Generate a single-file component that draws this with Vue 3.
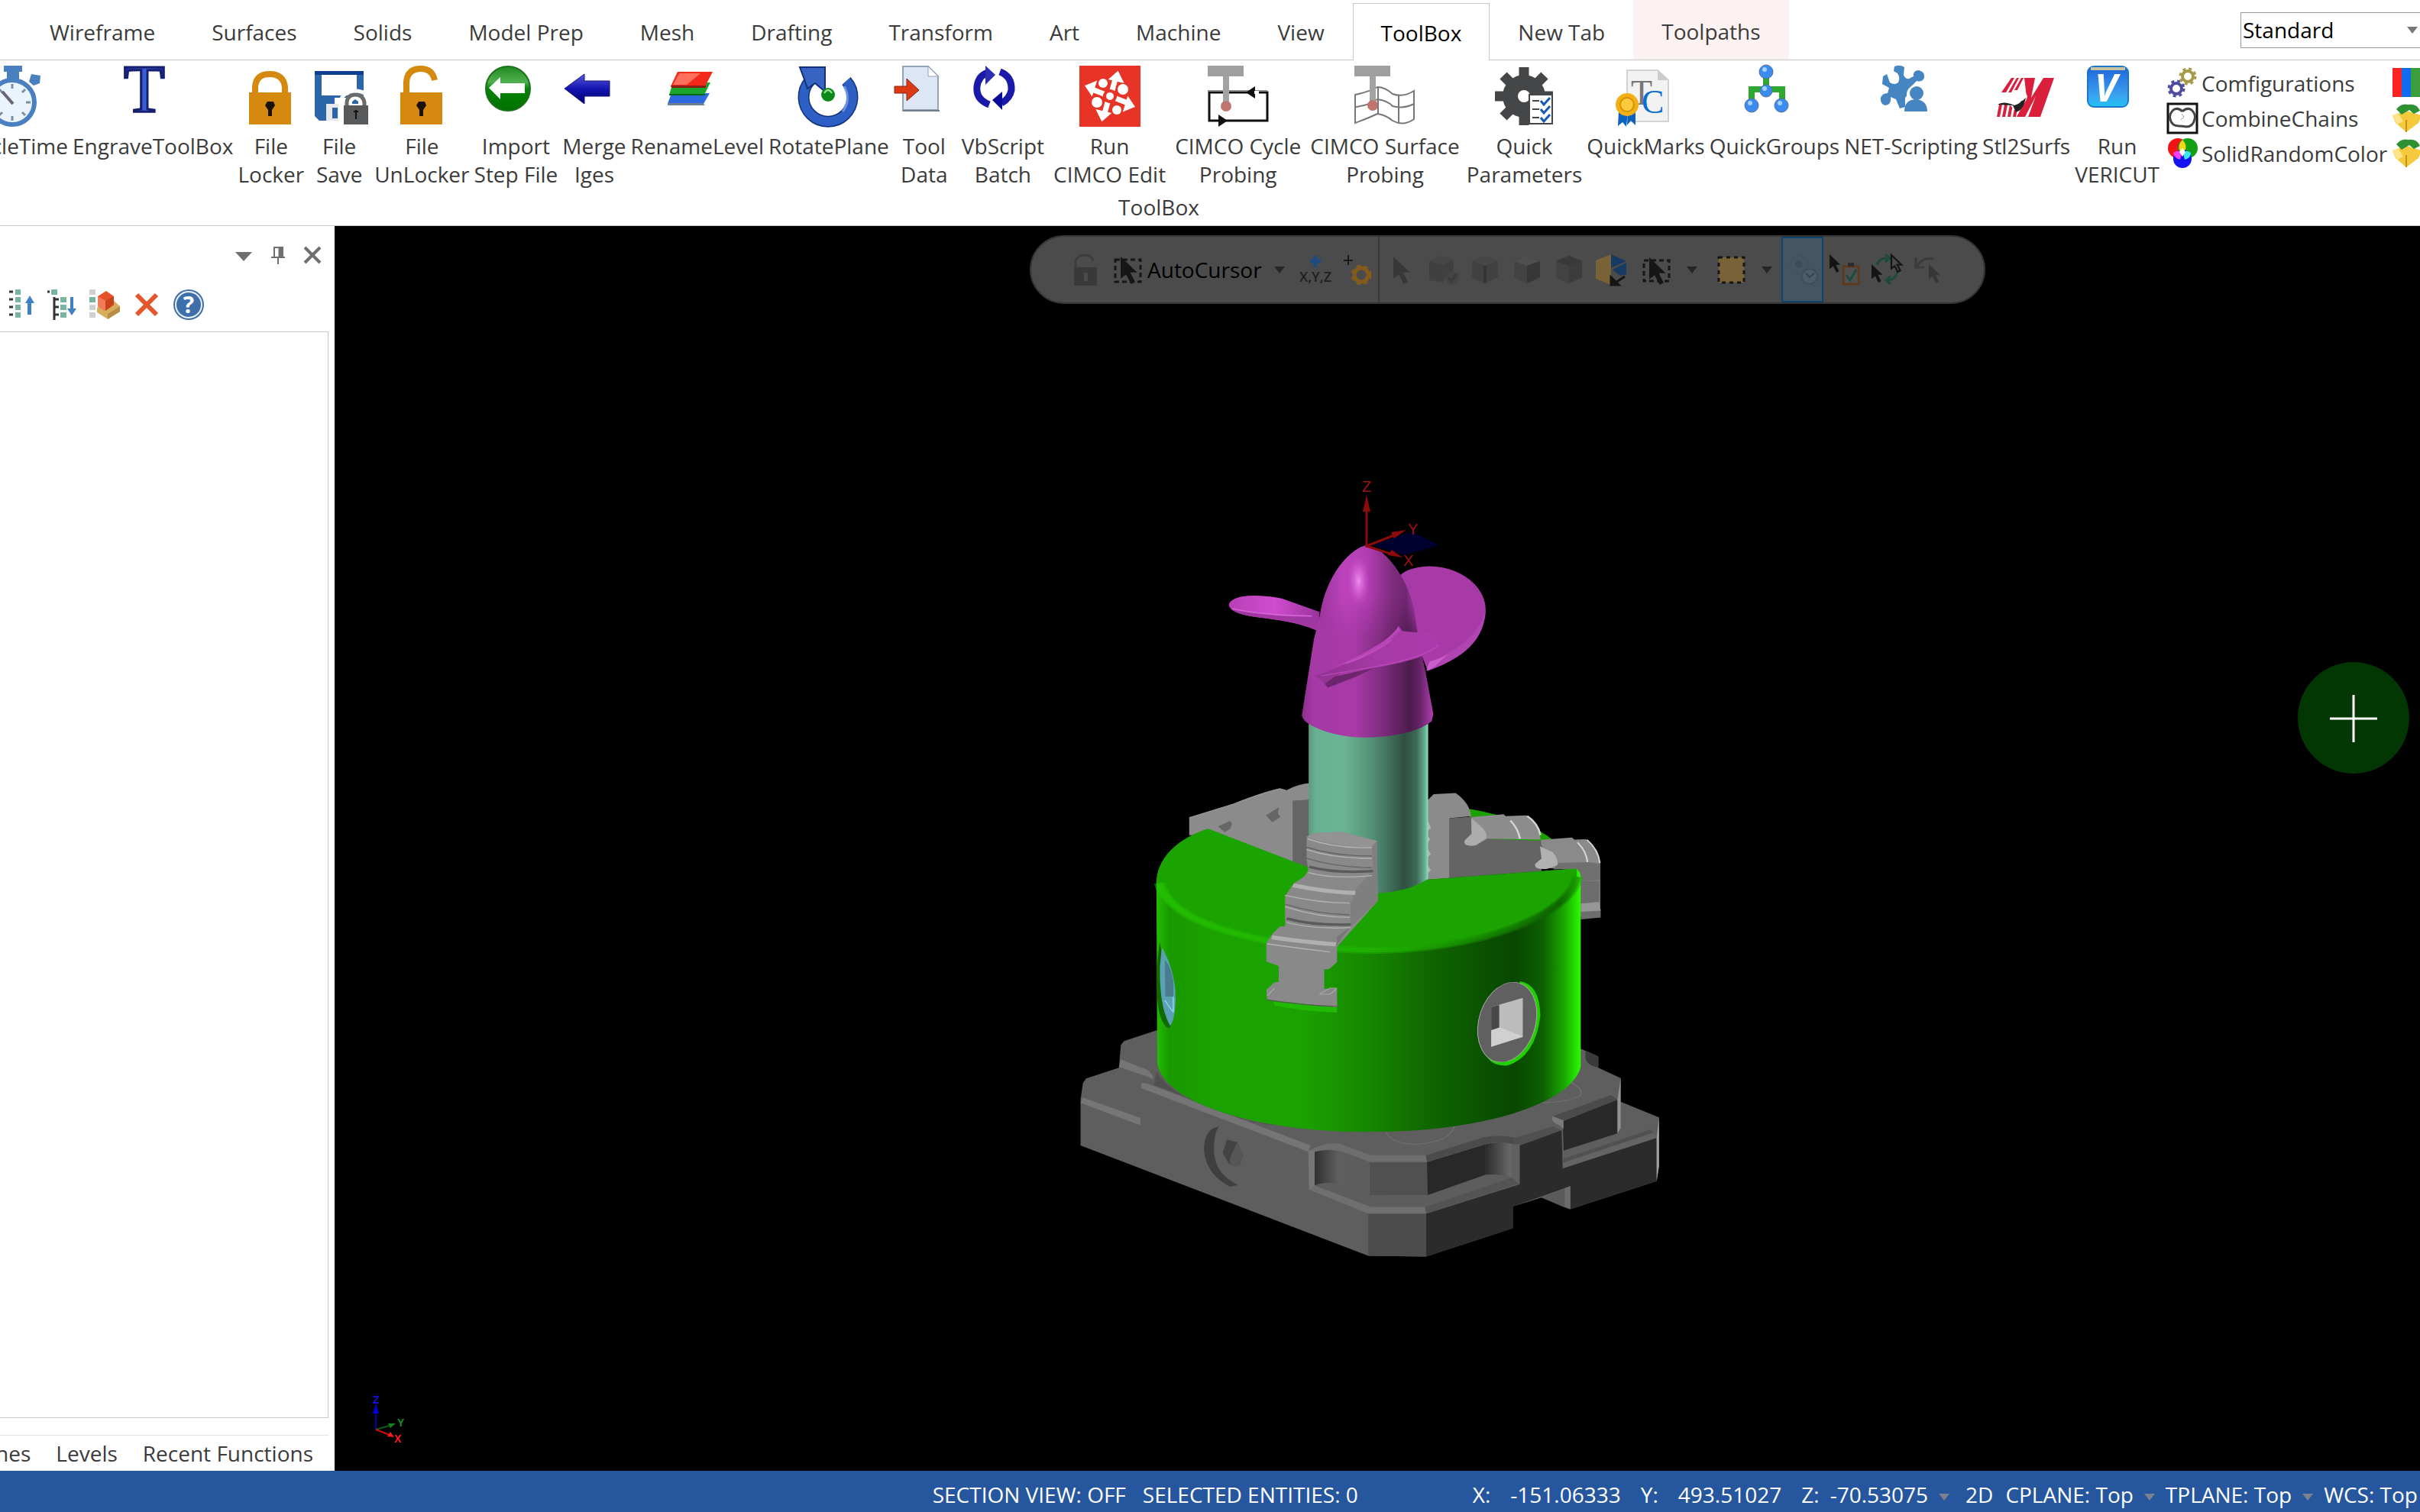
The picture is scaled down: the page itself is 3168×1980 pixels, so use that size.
<template>
  <div class="app">
    <header class="tab-bar">
      <nav class="tabs">
        <button
          v-for="tab in tabs"
          :key="tab"
          class="tab"
          :class="{ active: tab === activeTab, context: tab === 'Toolpaths' }"
          @click="activeTab = tab"
        >{{ tab }}</button>
      </nav>
      <select v-model="style" class="style-select" aria-label="Attribute style">
        <option>Standard</option>
      </select>
      <svg class="style-arrow" width="14" height="10" viewBox="0 0 14 10"><path d="M0 0h14L7 9z" fill="#777" /></svg>
    </header>

    <section class="ribbon">
      <div class="ribbon-row">
        <button v-for="tool in tools" :key="tool.icon" class="tool" :class="{ roomy: tool.roomy }">
          <svg class="tool-icon" viewBox="0 0 80 80" v-html="icons[tool.icon]"></svg>
          <span class="tool-label">{{ tool.label }}</span>
        </button>
        <div class="small-tools">
          <button v-for="item in smallTools" :key="item.icon" class="small-tool">
            <svg class="small-icon" viewBox="0 0 40 40" v-html="icons[item.icon]"></svg>
            <span>{{ item.label }}</span>
          </button>
        </div>
        <div class="small-tools">
          <button v-for="(name, i) in ['palette', 'gem', 'gem']" :key="i" class="small-tool" :aria-label="name">
            <svg class="small-icon" viewBox="0 0 40 40" v-html="icons[name]"></svg>
          </button>
        </div>
      </div>
      <div class="group-label">ToolBox</div>
    </section>

    <main class="workspace">
      <aside class="panel">
        <div class="panel-header">
          <button aria-label="Menu"><svg width="24" height="24" viewBox="0 0 24 24"><path d="M1 8h22L12 20z" fill="#6f6f6f" /></svg></button>
          <button aria-label="Pin">
            <svg width="24" height="24" viewBox="0 0 24 24" fill="none" stroke="#6f6f6f" stroke-width="2">
              <path d="M7 15V2h11v13M3 15h18M12 15v9" /><path d="M15 2v13" stroke-width="5" />
            </svg>
          </button>
          <button aria-label="Close"><svg width="24" height="24" viewBox="0 0 24 24"><path d="M2 2l20 20M22 2L2 22" stroke="#6f6f6f" stroke-width="4" /></svg></button>
        </div>
        <div class="panel-tools">
          <button v-for="name in panelTools" :key="name" :aria-label="name">
            <svg width="40" height="40" viewBox="0 0 40 40" v-html="icons[name]"></svg>
          </button>
        </div>
        <div class="panel-body"></div>
        <nav class="panel-tabs">
          <button v-for="t in panelTabs" :key="t">{{ t }}</button>
        </nav>
      </aside>

      <div class="viewport">
        <svg class="scene" viewBox="0 0 2730 1630" preserveAspectRatio="xMidYMid meet">
          <defs>
            <linearGradient id="greenSide" gradientUnits="userSpaceOnUse" x1="256" x2="1320" y1="0" y2="0">
              <stop offset="0" stop-color="#23bd00" /><stop offset=".03" stop-color="#199900" />
              <stop offset=".14" stop-color="#1ba200" /><stop offset=".34" stop-color="#1ba200" />
              <stop offset=".5" stop-color="#168600" /><stop offset=".66" stop-color="#0e6300" />
              <stop offset=".84" stop-color="#084600" /><stop offset=".91" stop-color="#0c6000" />
              <stop offset=".96" stop-color="#1aaa00" /><stop offset="1" stop-color="#2cff00" />
            </linearGradient>
            <linearGradient id="greenRim" gradientUnits="userSpaceOnUse" x1="256" x2="1320" y1="0" y2="0">
              <stop offset="0" stop-color="#24c000" /><stop offset=".5" stop-color="#20b400" />
              <stop offset=".7" stop-color="#189600" /><stop offset=".85" stop-color="#127800" />
              <stop offset=".95" stop-color="#0c6000" /><stop offset="1" stop-color="#1cae00" />
            </linearGradient>
            <linearGradient id="teal" gradientUnits="userSpaceOnUse" x1="637" x2="936" y1="0" y2="0">
              <stop offset="0" stop-color="#5c9a80" /><stop offset=".06" stop-color="#68b193" />
              <stop offset=".3" stop-color="#6ab494" /><stop offset=".55" stop-color="#528b73" />
              <stop offset=".8" stop-color="#2f5142" /><stop offset=".9" stop-color="#3c6755" />
              <stop offset=".97" stop-color="#65aa8d" /><stop offset="1" stop-color="#8de0c0" />
            </linearGradient>
            <linearGradient id="hub" gradientUnits="userSpaceOnUse" x1="620" x2="950" y1="0" y2="0">
              <stop offset="0" stop-color="#8c2f8c" /><stop offset=".08" stop-color="#a539a5" />
              <stop offset=".4" stop-color="#a83aa8" /><stop offset=".62" stop-color="#7c2b7c" />
              <stop offset=".82" stop-color="#4d1b4d" /><stop offset=".9" stop-color="#692469" />
              <stop offset="1" stop-color="#b440b4" />
            </linearGradient>
            <linearGradient id="nose" gradientUnits="userSpaceOnUse" x1="666" x2="905" y1="0" y2="0">
              <stop offset="0" stop-color="#9b369b" /><stop offset=".25" stop-color="#bd43bd" />
              <stop offset=".5" stop-color="#b03db0" /><stop offset=".75" stop-color="#7f2c7f" />
              <stop offset=".9" stop-color="#712771" /><stop offset="1" stop-color="#b440b4" />
            </linearGradient>
            <linearGradient id="noseFade" x1="0" x2="0" y1="0" y2="1">
              <stop offset="0" stop-color="#fff" /><stop offset=".55" stop-color="#fff" /><stop offset="1" stop-color="#000" />
            </linearGradient>
            <mask id="noseMask" maskUnits="userSpaceOnUse" x="640" y="290" width="300" height="330">
              <rect x="640" y="290" width="300" height="330" fill="url(#noseFade)" />
            </mask>
            <radialGradient id="shine">
              <stop offset="0" stop-color="#f08cf0" /><stop offset=".5" stop-color="#d865d8" stop-opacity=".6" />
              <stop offset="1" stop-color="#c045c0" stop-opacity="0" />
            </radialGradient>
            <linearGradient id="bladeL" x1="0" x2="1" y1="0" y2="0">
              <stop offset="0" stop-color="#b840b8" /><stop offset=".5" stop-color="#d04cd0" /><stop offset="1" stop-color="#9a349a" />
            </linearGradient>
            <linearGradient id="bladeF" x1="0" x2="1" y1="0" y2="0">
              <stop offset="0" stop-color="#8e318e" /><stop offset=".5" stop-color="#a63aa6" /><stop offset="1" stop-color="#ab3bab" />
            </linearGradient>
            <linearGradient id="pocketL" x1="0" x2="1" y1="0" y2="0">
              <stop offset="0" stop-color="#303030" /><stop offset=".7" stop-color="#5e5e5e" />
            </linearGradient>
            <linearGradient id="pocketR" x1="0" x2="1" y1="0" y2="0">
              <stop offset="0" stop-color="#2c2c2c" /><stop offset="1" stop-color="#6b6b6b" />
            </linearGradient>
          </defs>

          <!-- base plate -->
          <g transform="translate(942 854) scale(.523 .3333)">
            <path d="M256 598L175 640 167 655 162 745 80 787 72 805 66 870V1050L786 1484 931 1487 1148 1376V1290L1220 1255 1292 1301 1508 1190 1514 1130V940L1418 878V785L1362 745V700L1318 670z" fill="#5e5e5e" />
            <path d="M931 1318L1165 1203V1050L1270 990 1273 1140 1508 1020V1190L1292 1301V1210L1148 1290V1376L931 1487z" fill="#2b2b2b" />
            <path d="M1220 1255L1278 1224V1294z" fill="#5a5a5a" />
            <path d="M1278 1218l14-8v91l-14-8z" fill="#6b6b6b" />
            <path d="M1273 955L1410 870V1003L1275 1070z" fill="#292929" />
            <path d="M1248 935L1394 852 1410 870 1275 952z" fill="#4b4b4b" />
            <path d="M1410 870l8-85v195l-8 23z" fill="#929292" />
            <path d="M1508 1020l6-80v190l-6 60z" fill="#a0a0a0" />
            <path d="M1273 1103L1494 987 1508 1020 1273 1140z" fill="#646464" />
            <path d="M1273 1103L1494 987 1500 1000 1273 1118z" fill="#515151" />
            <path d="M786 1318H931V1487L786 1484z" fill="#4c4c4c" />
            <path d="M640 1225L652 1207 792 1291H928L1145 1175 1165 1200 931 1318H786z" fill="#6f6f6f" />
            <path d="M928 1291L1145 1175 1165 1200 931 1318z" fill="#545454" />
            <path d="M652 1075Q700 1055 735 1080L790 1115V1245L935 1247 1080 1165 1145 1175 928 1291H792L652 1207z" fill="#5d5d5d" />
            <path d="M652 1075Q700 1055 735 1080L735 1225 700 1198Q670 1195 652 1207z" fill="url(#pocketL)" />
            <path d="M790 1115H933L935 1245H790z" fill="#505050" />
            <path d="M933 1115L1080 1045V1165L935 1245z" fill="#282828" />
            <path d="M1080 1045Q1115 1032 1145 1044V1175Q1110 1160 1080 1165z" fill="url(#pocketR)" />
            <path d="M636 1072Q690 1025 730 1052L792 1088H930L1075 1018Q1120 1005 1155 1020L1148 1044Q1110 1032 1080 1045L933 1115H790L728 1078Q690 1058 652 1075z" fill="#6e6e6e" />
            <path d="M930 1088L1075 1018Q1120 1005 1155 1020L1148 1044Q1110 1032 1080 1045L933 1115z" fill="#4b4b4b" />
            <path d="M1155 1020L1248 975 1270 990 1165 1050H1145z" fill="#505050" />
            <path d="M1145 1045h20v157l-20-27z" fill="#606060" />
            <path d="M218 805L232 806 642 1050 636 1075 218 825z" fill="#757575" />
            <path d="M636 1070h16v138l-14 18z" fill="#767676" />
            <path d="M72 862L216 942V971L66 883z" fill="#767676" />
            <path d="M167 712L232 752Q248 768 248 790L234 780 162 742z" fill="#757575" />
            <path d="M256 760Q300 880 520 965L790 1000 500 960 250 812z" fill="#484848" opacity=".6" />
            <path d="M1248 935Q1240 955 1262 968L1275 985 1275 952z" fill="#7a7a7a" />
            <path d="M1330 678L1362 700V745Q1335 735 1330 710z" fill="#3a3a3a" />
            <path d="M832 1000Q845 1045 910 1045 990 1035 1002 975M1290 800Q1330 830 1315 855 1280 885 1200 882" fill="none" stroke="#777" stroke-width="2" />
            <path d="M413 975Q375 985 375 1065 378 1160 440 1212L460 1205Q400 1160 400 1065 400 1000 413 975z" fill="#3f3f3f" />
            <path d="M432 1027L458 1037 473 1090 462 1132 440 1127 422 1080z" fill="#434343" />
            <path d="M458 1037L473 1090 462 1132 440 1127 440 1100z" fill="#565656" />
          </g>

          <!-- rear jaws -->
          <g transform="translate(942 304) scale(.523 .3827)">
            <path d="M1040 1200Q1200 1240 1260 1320L1040 1320z" fill="#1ba000" />
            <path d="M338 1230L450 1183Q520 1145 565 1131L580 1137Q610 1115 640 1112V1420L385 1290 338 1290z" fill="#8b8b8b" />
            <path d="M338 1230L450 1183Q520 1145 565 1131L580 1137" fill="none" stroke="#999" stroke-width="3" />
            <path d="M597 1172L640 1168V1410L597 1388z" fill="#656565" />
            <path d="M410 1260l30-19 5 10-4 16-14 13zM530 1222l33-28-3 22 6 12-20 18z" fill="#666" />
            <path d="M935 1170L950 1150 1005 1146Q1040 1180 1044 1225L990 1232V1445L932 1443z" fill="#8b8b8b" />
            <path d="M935 1240l8 25-8 10zM935 1290l6 15-6 10zM935 1340l8 14-8 12zM935 1395l8 14-8 12z" fill="#b5b5b5" />
            <path d="M990 1232L1050 1226V1300L1220 1310V1415L930 1443H990z" fill="#646464" />
            <path d="M1044 1228L1125 1218 1130 1225 1182 1222Q1212 1250 1218 1305L1085 1302 1055 1325Q1022 1330 1028 1308L1045 1285z" fill="#8d8d8d" />
            <path d="M1044 1232l22 25Q1085 1280 1082 1300L1055 1325Q1022 1330 1028 1308L1045 1285z" fill="#acacac" />
            <path d="M1142 1240Q1160 1265 1166 1302M1184 1224Q1212 1250 1217 1290" fill="none" stroke="#d6d6d6" stroke-width="5" />
            <path d="M1218 1306L1296 1298 1302 1305 1332 1304Q1362 1340 1367 1385V1568H1318V1410L1205 1400 1225 1370z" fill="#8a8a8a" />
            <path d="M1262 1385L1338 1382 1367 1388V1444L1318 1446 1310 1405 1250 1407z" fill="#707070" />
            <path d="M1216 1328l32 20Q1262 1370 1260 1392L1235 1405Q1200 1410 1204 1388L1220 1370z" fill="#b1b1b1" />
            <path d="M1310 1315Q1332 1345 1335 1382M1334 1306Q1362 1340 1366 1385" fill="none" stroke="#d6d6d6" stroke-width="4" />
            <path d="M1318 1446H1366L1364 1520 1368 1548V1572L1318 1578z" fill="#6d6d6d" />
            <path d="M1318 1524L1364 1518 1368 1548 1318 1552z" fill="#969696" />
          </g>

          <!-- chuck body -->
          <g transform="translate(942 854) scale(.523 .3333)">
            <path d="M385-194C300-150 256-70 256 20L258 730C275 870 480 997 790 997 1100 997 1300 870 1318 740V0C1318-25 1312-37 1300-37L930 6 635-43z" fill="url(#greenSide)" />
            <path d="M385-194C300-150 258-70 258 10 270 170 500 275 800 282 1060 280 1280 150 1308 10V-37H1300L930 6 635-43z" fill="#1ba300" />
            <path d="M264 20C285 170 500 275 800 284 1060 282 1290 150 1310-5" fill="none" stroke="url(#greenRim)" stroke-width="28" opacity=".5" />
            <path d="M264 20C285 170 500 275 800 284 1060 282 1290 150 1310-5" fill="none" stroke="url(#greenRim)" stroke-width="16" opacity=".8" />
            <path d="M264 252Q250 400 262 520 270 580 288 590L292 578Q262 500 268 280z" fill="#106a00" />
            <path d="M270 272Q305 370 304 480 302 560 290 580 262 500 265 340z" fill="#5ba0b4" />
            <path d="M277 322Q290 340 298 400V465H278z" fill="#477d8e" />
            <path d="M298 465V527L277 480" fill="none" stroke="#8fd6ea" stroke-width="3" />
            <path d="M1165 405Q1215 415 1217 540 1205 700 1135 736 1100 740 1085 705L1190 600z" fill="#22d000" />
            <ellipse cx="1134" cy="566" rx="72" ry="158" fill="#606060" stroke="#aaa" stroke-width="2" transform="rotate(7 1134 566)" />
            <path d="M1094 506L1173 470V624L1094 662z" fill="#bcbcbc" />
            <path d="M1094 506l20-8v90l-20 10z" fill="#484848" />
            <path d="M1094 598l22-12 57 36-79 40z" fill="#d0d0d0" />
            <path d="M548 485L708 508V528Q620 522 552 500z" fill="#20bb00" />
          </g>

          <!-- cylinder -->
          <g transform="translate(942 304) scale(.523 .3827)">
            <path d="M637 900H936V1440Q880 1490 785 1490 690 1480 637 1420z" fill="url(#teal)" />
          </g>

          <!-- front jaw -->
          <g transform="translate(942 854) scale(.523 .3333)">
            <path d="M632-163L650-177 720-182 808-146 810 90 708 270V330L688 358H676V435L708 432V508L533 478 531 438 552 408H562V345L531 328V255L548 215 565 190 578 188V70L600 20 625-5 636-30 632-75z" fill="#898989" />
            <path d="M796-128L808-146 810 90 742 190V100L755 42 798-30z" fill="#7f7f7f" />
            <path d="M708 230L742 190 720 235 708 265z" fill="#777" />
            <path d="M632-163L650-177 720-182 808-146 794-122Q700-125 632-163z" fill="#939393" />
            <path d="M632-122Q700-87 795-87M632-78Q700-44 795-41M578 102Q660 142 740 144" fill="none" stroke="#626262" stroke-width="4" />
            <path d="M634-155Q700-117 795-120M632-112Q700-77 795-78M636-22Q700 5 795-10M578 67Q660 97 740 98M578 112Q660 154 740 154M533 258Q610 275 690 290M582 174Q650 202 742 194" fill="none" stroke="#b4b4b4" stroke-width="4" />
            <path d="M598 28Q680 55 754 58M545 232Q620 250 705 260" fill="none" stroke="#b0b0b0" stroke-width="16" />
            <path d="M638-45Q700-18 798-28M582 158Q650 187 742 182" fill="none" stroke="#5a5a5a" stroke-width="10" />
            <path d="M533 462L552 432M664 456L690 432H708M664 456H690L706 436" fill="none" stroke="#a8a8a8" stroke-width="3" />
            <path d="M533 478Q620 500 708 504" fill="none" stroke="#555" stroke-width="3" />
          </g>

          <!-- propeller -->
          <g transform="translate(942 304) scale(.523 .3827)">
            <path d="M866 400Q890 372 940 370C1020 372 1080 440 1080 520 1076 620 1030 680 935 728L910 640z" fill="#a73aa7" />
            <path d="M1080 520C1076 620 1030 680 935 728L940 697Q1060 630 1080 520z" fill="#b044b0" />
            <path d="M940 695Q960 690 985 672L950 715 930 730z" fill="#e070e0" opacity=".6" />
            <path d="M437 502C445 465 510 465 570 480L664 526V595Q620 562 520 546 440 535 437 502z" fill="url(#bladeL)" />
            <path d="M440 510Q500 540 655 545L660 590Q620 562 520 546 450 535 440 510z" fill="#a138a1" />
            <path d="M445 515Q520 538 645 540" fill="none" stroke="#d866d8" stroke-width="4" />
            <path d="M782 298C740 310 680 400 665 540L650 620 620 880Q622 900 645 915 700 955 785 956 900 950 945 900L949 875 930 735 915 640 905 560C895 430 840 330 800 306z" fill="url(#hub)" />
            <path d="M782 298C740 310 680 400 665 540V620H913L905 560C895 430 840 330 800 306z" fill="url(#nose)" mask="url(#noseMask)" />
            <ellipse cx="762" cy="420" rx="30" ry="95" fill="url(#shine)" />
            <path d="M862 575L872 592 940 600Q965 615 962 640 940 685 810 715L720 735 680 775 655 745Q730 710 790 655 850 610 862 575z" fill="url(#bladeF)" />
            <path d="M862 575Q840 620 790 655 740 695 690 720L760 690Q830 640 866 590z" fill="#b946b9" />
            <path d="M845 620Q800 670 730 702" fill="none" stroke="#cf5bcf" stroke-width="5" opacity=".5" />
            <path d="M962 640Q930 680 810 712L660 747" fill="none" stroke="#bb4bbb" stroke-width="3" />
            <path d="M700 748L800 718 755 748 685 785 675 768z" fill="#6d256d" />
            <path d="M657 745L705 744 678 772z" fill="#943494" />
          </g>

          <!-- axis markers -->
          <g fill="none" stroke="#8c0a0a" stroke-width="3">
            <path d="M1358 418L1410 400 1446 418 1400 431z" fill="#00002e" stroke="none" />
            <path d="M1351 372V419L1392 403M1351 419L1388 431" />
            <path d="M1351 352l-5 22h10zM1403 398l-20 3 4 8zM1398 434l-14-10-5 7z" fill="#8c0a0a" stroke="none" />
          </g>
          <g class="axis-text" fill="#9c1010">
            <text x="1345" y="348">Z</text><text x="1405" y="404">Y</text><text x="1399" y="445">X</text>
          </g>
          <g fill="none" stroke-width="2">
            <path d="M54 1576V1552" stroke="#0000b0" /><path d="M54 1542l-4 13h8z" fill="#0000d8" />
            <path d="M54 1576L72 1571" stroke="#0c5a14" /><path d="M80 1568l-10 0 3 6z" fill="#128020" />
            <path d="M54 1576L72 1583" stroke="#d01010" /><path d="M78 1586l-5-7-4 6z" fill="#ff1a1a" />
          </g>
          <g class="axis-text small">
            <text x="50" y="1542" fill="#1212e0">Z</text><text x="82" y="1572" fill="#149024">Y</text><text x="78" y="1593" fill="#ff1a1a">X</text>
          </g>

          <!-- pointer -->
          <circle cx="2643" cy="644" r="73" fill="#023602" />
          <path d="M2643 614v62M2612 645h62" stroke="#fff" stroke-width="3" />
        </svg>

        <div class="selection-bar">
          <button class="sel-btn" aria-label="Lock"><svg viewBox="0 0 40 40" v-html="icons.selLock"></svg></button>
          <button class="auto-cursor">
            <svg viewBox="0 0 40 40" v-html="icons.cursorBox"></svg>
            <span>AutoCursor</span>
            <i class="caret"></i>
          </button>
          <button class="sel-btn" aria-label="Fast point"><svg viewBox="0 0 40 40" v-html="icons.xyz"></svg></button>
          <button class="sel-btn last" aria-label="Options"><svg viewBox="0 0 40 40" v-html="icons.addGear"></svg></button>
          <button
            v-for="item in selectionTools"
            :key="item.icon"
            class="sel-btn"
            :class="{ split: item.split, selected: item.selected }"
            :aria-label="item.icon"
          >
            <svg viewBox="0 0 40 40" v-html="icons[item.icon]"></svg>
            <i v-if="item.split" class="caret"></i>
          </button>
        </div>
      </div>
    </main>

    <footer class="status-bar">
      <span class="section-view">SECTION VIEW: OFF</span>
      <span class="entities">SELECTED ENTITIES: 0</span>
      <span class="axis">X:</span><span class="coord">-151.06333</span>
      <span class="axis">Y:</span><span class="coord">493.51027</span>
      <span class="axis">Z:</span><button class="plane first">-70.53075<i class="caret"></i></button>
      <button class="mode">2D</button>
      <button class="plane">CPLANE: Top<i class="caret"></i></button>
      <button class="plane">TPLANE: Top<i class="caret"></i></button>
      <button class="plane">WCS: Top</button>
    </footer>
  </div>
</template>

<script setup>
import { ref } from 'vue'

const activeTab = ref('ToolBox')
const style = ref('Standard')

const tabs = [
  'Wireframe', 'Surfaces', 'Solids', 'Model Prep', 'Mesh', 'Drafting', 'Transform',
  'Art', 'Machine', 'View', 'ToolBox', 'New Tab', 'Toolpaths'
]

const tools = [
  { label: 'CycleTime', icon: 'watch' },
  { label: 'EngraveToolBox', icon: 'engrave' },
  { label: 'File\nLocker', icon: 'lock' },
  { label: 'File\nSave', icon: 'save' },
  { label: 'File\nUnLocker', icon: 'unlock' },
  { label: 'Import\nStep File', icon: 'importStep' },
  { label: 'Merge\nIges', icon: 'merge' },
  { label: 'RenameLevel', icon: 'levels' },
  { label: 'RotatePlane', icon: 'rotate' },
  { label: 'Tool\nData', icon: 'toolData' },
  { label: 'VbScript\nBatch', icon: 'batch', roomy: true },
  { label: 'Run\nCIMCO Edit', icon: 'cimco', roomy: true },
  { label: 'CIMCO Cycle\nProbing', icon: 'cycleProbe', roomy: true },
  { label: 'CIMCO Surface\nProbing', icon: 'surfProbe', roomy: true },
  { label: 'Quick\nParameters', icon: 'params' },
  { label: 'QuickMarks', icon: 'marks' },
  { label: 'QuickGroups', icon: 'groups' },
  { label: 'NET-Scripting', icon: 'net' },
  { label: 'Stl2Surfs', icon: 'stl' },
  { label: 'Run\nVERICUT', icon: 'vericut' }
]

const smallTools = [
  { label: 'Comfigurations', icon: 'config' },
  { label: 'CombineChains', icon: 'chains' },
  { label: 'SolidRandomColor', icon: 'rgb' }
]

const panelTools = ['treeUp', 'treeDown', 'treeSolid', 'cross', 'help']
const panelTabs = ['Planes', 'Levels', 'Recent Functions']

const selectionTools = [
  { icon: 'cursor' },
  { icon: 'cubeCheck' },
  { icon: 'cubeEdge' },
  { icon: 'cubeFace' },
  { icon: 'cube' },
  { icon: 'cubeColor' },
  { icon: 'cursorBox2', split: true },
  { icon: 'window', split: true },
  { icon: 'gearClock', selected: true },
  { icon: 'clipboard' },
  { icon: 'swap' },
  { icon: 'undo' }
]

const arrowHead = 'M0 0L0 32 8 26 15 40 21 37 14 23 24 23z'

const icons = {
  watch: `
    <circle cx="33" cy="48" r="29" fill="#eaf4fc" stroke="#4a7fc0" stroke-width="6"/>
    <path d="M22 0h24v8h-4v9H26V8h-4zM58 11l12 2-1 10-8 3-6-5z" fill="#4a7fc0"/>
    <path d="M33 24v6M33 66v6M9 48h6M51 48h6M16 31l4 4M50 31l-4 4M16 65l4-4M50 65l-4-4" stroke="#7b8fa0" stroke-width="3"/>
    <path d="M20 34l14 16" stroke="#667" stroke-width="4"/>`,
  engrave: `
    <defs><linearGradient id="ge" x1="0" x2="1" y1="0" y2="0"><stop offset="0" stop-color="#16289a"/><stop offset=".55" stop-color="#3a64e0"/><stop offset="1" stop-color="#16289a"/></linearGradient></defs>
    <text x="29" y="60" text-anchor="middle" font-family="Liberation Serif, serif" font-size="88" fill="url(#ge)" stroke="#16206e" stroke-width="3">T</text>`,
  lock: `
    <path d="M19 37V28Q20 11 38 11T58 28V37" fill="none" stroke="#d6890f" stroke-width="8"/>
    <rect x="11" y="35" width="55" height="42" fill="#d6890f"/>
    <path d="M35 47h8l2 5-4 6v8h-5v-8l-4-6z" fill="#1a1208"/>`,
  save: `
    <path d="M8 7H72V42H34V72H14L8 66z" fill="#2c66aa"/><rect x="8" y="7" width="64" height="5" fill="#0f3f8e"/>
    <rect x="17" y="12" width="46" height="27" fill="#fff"/>
    <rect x="23" y="50" width="20" height="22" fill="#e6e8ea"/><rect x="31" y="55" width="7" height="14" fill="#2c66aa"/>
    <path d="M42 74V46Q46 33 61 33T80 46" fill="none" stroke="#fff" stroke-width="5"/>
    <path d="M50 54V48Q51 38 61 38T73 48V54" fill="#fff" stroke="#6b6b6b" stroke-width="5"/>
    <path d="M57 47l4-3 4 3v3h-8z" fill="#2c66aa"/>
    <rect x="46" y="52" width="32" height="25" fill="#58595b"/><path d="M62 58v12M59 60h6" stroke="#111" stroke-width="2"/>`,
  unlock: `
    <path d="M20 37V22Q21 4 39 4 54 4 57 19" fill="none" stroke="#d6890f" stroke-width="8"/>
    <rect x="12" y="35" width="55" height="42" fill="#d6890f"/>
    <path d="M36 47h8l2 5-4 6v8h-5v-8l-4-6z" fill="#1a1208"/>`,
  importStep: `
    <defs><linearGradient id="gi" x1="0" x2="0" y1="0" y2="1"><stop offset="0" stop-color="#1f8a1f"/><stop offset=".35" stop-color="#4fb04f"/><stop offset=".5" stop-color="#068406"/><stop offset="1" stop-color="#007000"/></linearGradient></defs>
    <circle cx="30" cy="30" r="29" fill="url(#gi)" stroke="#1c701c" stroke-width="2"/>
    <path d="M5 29L20 15v8h32v13H20v8z" fill="#fff"/>`,
  merge: `
    <defs><linearGradient id="gm" x1="0" x2="0" y1="0" y2="1"><stop offset="0" stop-color="#5a5ae0"/><stop offset=".5" stop-color="#1414b0"/><stop offset="1" stop-color="#00006e"/></linearGradient></defs>
    <path d="M1 30L27 11v9H60V40H27V50z" fill="url(#gm)" stroke="#15157a" stroke-width="1"/>`,
  levels: `
    <path d="M6 36H56L48 50H1z" fill="#2d6ae0"/><path d="M1 49h46l3 3H1z" fill="#6d8090"/>
    <path d="M8 22H57L49 38H3z" fill="#1aa52c"/><path d="M3 37h47v2H3z" fill="#0b6414"/>
    <path d="M14 8H60L50 27H5z" fill="#f32a1a"/><path d="M16 10H44L26 25H8z" fill="#ff6f5c"/><path d="M5 26h46v3H6z" fill="#8e1c14"/>`,
  rotate: `
    <path d="M63 20A32 32 0 1 1 15 20" fill="none" stroke="#10307c" stroke-width="15"/>
    <path d="M63 20A32 32 0 1 1 15 20" fill="none" stroke="#2e5fc4" stroke-width="12"/>
    <path d="M2 2H35V34L22 23 12 30 8 18z" fill="#3763c2" stroke="#10307c" stroke-width="2"/>
    <path d="M60 27A28 28 0 0 1 58 60" fill="none" stroke="#6c93e4" stroke-width="3"/>
    <circle cx="39" cy="38" r="9" fill="#0b8a1a"/><path d="M34 36q5-8 10 0" fill="none" stroke="#9be29b" stroke-width="2"/>`,
  toolData: `
    <path d="M12 1H45L58 14V58H12z" fill="#dde6f4" stroke="#94a4b8" stroke-width="2"/>
    <path d="M45 1V14H58z" fill="#fff" stroke="#94a4b8"/><path d="M11 58h49v2H12z" fill="#6f7c8c"/>
    <path d="M1 27h16V17L33 32 17 46V36H1z" fill="#dc3a14" stroke="#8c2410" stroke-width="1"/>`,
  batch: `
    <path d="M22 51Q4 44 6 27 8 13 20 9" fill="none" stroke="#1a1aa8" stroke-width="9"/>
    <path d="M17 0L30 12 17 25z" fill="#2c2cb4"/>
    <path d="M36 8Q52 14 51 32 49 43 38 49" fill="none" stroke="#1a1aa8" stroke-width="9"/>
    <path d="M39 58L26 45 39 34z" fill="#0a0a98"/>`,
  cimco: `
    <rect width="80" height="80" fill="#e83426"/>
    <g stroke="#fff" stroke-width="7" fill="#fff">
      <path d="M43 32L48 14M48 43L66 50M37 48L32 66M32 37L14 30" />
      <path d="M50 10l5 10-13-3zM70 53l-10 4 4-13zM30 70l-5-10 13 3zM10 27l10-4-4 13z" stroke-width="4"/>
      <g stroke="none"><circle cx="31" cy="23" r="6"/><circle cx="57" cy="31" r="7"/><circle cx="23" cy="48" r="7"/><circle cx="49" cy="58" r="6"/></g>
    </g>
    <circle cx="40" cy="40" r="9" fill="#e83426"/><circle cx="40" cy="40" r="5" fill="#fff"/>`,
  cycleProbe: `
    <path d="M2 35H78V72H2z" fill="none" stroke="#111" stroke-width="3"/>
    <path d="M0 33h78" stroke="#888" stroke-width="2"/><path d="M62 27v16l-12-8z" fill="#111"/><path d="M67 35h-6" stroke="#fff" stroke-width="4"/>
    <path d="M14 64v16l12-8z" fill="#111"/>
    <rect width="47" height="14" fill="#9f9f9f"/><rect x="20" y="14" width="8" height="40" fill="#a3a3a3"/>
    <circle cx="24" cy="53" r="7" fill="#bf7470"/>`,
  surfProbe: `
    <path d="M1 38Q20 34 30 28 40 28 50 37 64 42 78 33V70Q64 80 50 72 40 64 30 63 20 68 1 75zM1 54Q20 52 30 44 44 46 50 53 64 57 78 50M31 28V63M58 38V75" fill="none" stroke="#777" stroke-width="2"/>
    <rect width="47" height="14" fill="#9f9f9f"/><rect x="20" y="14" width="8" height="34" fill="#a3a3a3"/>
    <circle cx="24" cy="52" r="7" fill="#bf7470"/>`,
  params: `
    <circle cx="39" cy="40" r="28" fill="#454648"/><path d="M39 2V78M1 40H77M12 13L66 67M66 13L12 67" stroke="#454648" stroke-width="13"/>
    <circle cx="39" cy="40" r="8" fill="#fff"/>
    <rect x="46" y="38" width="30" height="38" fill="#fff" stroke="#454648" stroke-width="2"/>
    <path d="M50 46h9M50 57h9M50 68h9" stroke="#454648" stroke-width="2"/>
    <path d="M61 46l4 5 8-9M61 57l4 5 8-9M61 68l4 5 8-9" fill="none" stroke="#1858b8" stroke-width="3"/>`,
  marks: `
    <path d="M16 6H56L70 19V73H16z" fill="#f2f2f2" stroke="#d2d2d2" stroke-width="2"/><path d="M56 6V19H70z" fill="#ccc"/>
    <text x="21" y="51" font-family="Liberation Serif, serif" font-size="46" fill="#777">T</text>
    <text x="35" y="62" font-family="Liberation Serif, serif" font-size="44" fill="#0a70d0">C</text>
    <path d="M5 60h12l-2 20-5-6-6 5zM17 60h10v18l-6-6-5 6z" fill="#0d62be"/>
    <circle cx="16" cy="51" r="15" fill="#f3b014"/><circle cx="16" cy="51" r="9" fill="#fbcb3e" stroke="#d99000" stroke-width="2"/>`,
  groups: `
    <path d="M29 14V30M10 46V31H50V46" fill="none" stroke="#2ea82e" stroke-width="8"/>
    <g fill="#3b8cf0" stroke="#5a6e90" stroke-width="1"><circle cx="29" cy="8" r="9"/><circle cx="29" cy="33" r="8"/><circle cx="10" cy="52" r="9"/><circle cx="49" cy="52" r="9"/></g>
    <g fill="#a8d0ff"><circle cx="27" cy="5" r="3"/><circle cx="27" cy="30" r="3"/><circle cx="8" cy="49" r="3"/><circle cx="47" cy="49" r="3"/></g>`,
  net: `
    <path d="M18 1Q25-2 31 2L30 12Q32 18 37 17L43 14Q42 6 50 6 58 8 57 16 54 22 47 20L40 27V33L32 42V54L25 56 20 44 13 41Q14 52 6 52-1 50 0 42 2 36 9 36L11 29 2 24 3 14 8 11 12 22Q18 26 23 22 26 16 22 10L17 7z" fill="#4585c2"/>
    <circle cx="47" cy="38" r="13" fill="#fff"/><circle cx="47" cy="36" r="9" fill="#4585c2"/>
    <path d="M31 60Q31 44 47 44 61 46 61 60z" fill="#4585c2"/>`,
  stl: `
    <g fill="#d91f3c"><path d="M37 16H51L46 42 62 16H76L58 67H42L52 40 38 67H27L40 42z"/>
    <path d="M20 16h4L13 35H7zM27 16h3L20 35h-4zM33 16h3L28 32h-4zM4 51h4L5 67H1zM11 51h4l-3 16H8zM18 51h4l-3 16h-4zM25 51h4l-3 16h-4z"/></g>
    <path d="M1 49Q20 42 34 26L41 40Q38 54 24 58 16 46 1 51z" fill="#fff"/>
    <path d="M2 51Q14 44 25 48Q34 48 39 42 36 58 26 61L22 52z" fill="#222"/><path d="M3 45Q16 38 36 38 34 50 24 52 12 46 3 50z" fill="#fff"/>`,
  vericut: `
    <defs><linearGradient id="gv" x1="0" x2="0" y1="0" y2="1"><stop offset="0" stop-color="#1c64d8"/><stop offset=".7" stop-color="#3ba0f0"/><stop offset="1" stop-color="#22c4f4"/></linearGradient></defs>
    <rect x="1" y="1" width="53" height="53" rx="8" fill="url(#gv)" stroke="#1a78cc" stroke-width="2"/>
    <rect x="5" y="2" width="45" height="4" fill="#c9c4a0"/>
    <text x="10" y="47" font-family="Open Sans, sans-serif" font-weight="bold" font-style="italic" font-size="50" fill="#fff">V</text>`,
  config: `
    <circle cx="27" cy="11" r="7" fill="none" stroke="#a59a48" stroke-width="4"/><circle cx="27" cy="11" r="10" fill="none" stroke="#a59a48" stroke-width="3" stroke-dasharray="4 4"/>
    <circle cx="12" cy="27" r="7" fill="none" stroke="#4e4ca0" stroke-width="4"/><circle cx="12" cy="27" r="10" fill="none" stroke="#4e4ca0" stroke-width="3" stroke-dasharray="4 4"/>`,
  chains: `
    <rect x="1" y="1" width="38" height="38" fill="#fff" stroke="#111" stroke-width="3"/>
    <path d="M20 11Q14 5 8 9 2 15 4 21 6 30 15 30M20 11Q26 5 32 9 38 15 36 21 34 31 25 31Q18 30 15 30" fill="none" stroke="#444" stroke-width="3"/>
    <path d="M19 14l3 4-4 4" fill="none" stroke="#999"/>`,
  rgb: `
    <circle cx="14" cy="13" r="13" fill="#f01414"/><circle cx="27" cy="13" r="13" fill="#14a014"/><circle cx="20" cy="27" r="12" fill="#1414f0"/>
    <path d="M20 2Q28 10 22 18H17Q13 9 20 2z" fill="#f4d814"/><path d="M8 19Q16 14 19 20L17 28Q9 26 8 19z" fill="#f43cf4"/><path d="M31 19Q24 14 21 20L23 28Q31 26 31 19z" fill="#3ce8f0"/><path d="M20 13l4 5-4 6-4-6z" fill="#fff"/>`,
  palette: `
    <rect width="12" height="38" fill="#f22"/><rect x="12" width="12" height="38" fill="#0f6bf0"/><rect x="24" width="15" height="38" fill="#3b9e3b"/>`,
  gem: `
    <path d="M0 16L18 10 38 16 34 26 18 38 4 26z" fill="#f5c93c"/><path d="M0 16l8-2 6 10-8 4z" fill="#ffe48a"/><path d="M18 38V22" stroke="#c8901c" stroke-width="2"/>
    <path d="M5 8Q12 0 20 2 32 0 36 10L28 14 22 9 12 15z" fill="#2e9232"/>`,
  treeUp: `
    <path d="M5 3h5M5 13h5M5 23h5M5 33h5" stroke="#333" stroke-width="3"/>
    <path d="M13 0h7v7h-7zM13 10h7v7h-7zM13 20h7v7h-7zM13 30h7v7h-7z" fill="#78b4a0"/>
    <path d="M32 8l6 10h-4v15h-5V18h-3z" fill="#3f80c4"/>`,
  treeDown: `
    <path d="M0 3h3M9 10V40M9 13h6M9 23h6M9 33h6" stroke="#333" stroke-width="3"/>
    <path d="M5 0h8v7H5zM17 10h8v7h-8zM17 20h8v7h-8zM17 30h8v7h-8z" fill="#78b4a0"/>
    <path d="M32 34l6-9h-4V10h-4v15h-4z" fill="#3f80c4"/>`,
  treeSolid: `
    <path d="M0 0h8v7H0zM0 20h8v7H0zM0 30h8v7H0z" fill="#cfd0d0"/><path d="M0 10h8v7H0z" fill="#78b4a0"/>
    <path d="M10 24L30 13 40 22V29L24 39 10 30z" fill="#d8ad5c"/><path d="M24 32L40 22V29L24 39z" fill="#b88d44"/>
    <path d="M11 9L22 2 32 9V20L21 28 11 22z" fill="#e4532a"/><path d="M11 9L21 15V28L11 22z" fill="#f27a56"/><path d="M21 15L32 9V20L21 28z" fill="#c9431d"/>`,
  cross: `<path d="M7 7L33 33M33 7L7 33" stroke="#e2572b" stroke-width="6"/>`,
  help: `
    <circle cx="20" cy="20" r="20" fill="#3f6faa"/><circle cx="20" cy="20" r="17" fill="none" stroke="#e8f0f8" stroke-width="2"/>
    <text x="20" y="31" text-anchor="middle" font-family="Open Sans, sans-serif" font-weight="bold" font-size="30" fill="#fff">?</text>`,
  selLock: `
    <path d="M6 18V9Q8 1 18 1 28 1 29 9" fill="none" stroke="#3d3d3d" stroke-width="3"/><rect x="4" y="17" width="30" height="24" fill="#393939"/><rect x="17" y="24" width="5" height="11" fill="#4b4b4b"/>`,
  cursorBox: `
    <rect x="4" y="7" width="33" height="29" fill="none" stroke="#161616" stroke-width="3" stroke-dasharray="6 4"/>
    <path d="${arrowHead}" transform="translate(11 3) scale(.9)" fill="#161616"/>`,
  cursorBox2: `
    <rect x="4" y="8" width="33" height="27" fill="none" stroke="#161616" stroke-width="3" stroke-dasharray="6 4"/>
    <path d="${arrowHead}" transform="translate(11 4) scale(.9)" fill="#161616"/>`,
  xyz: `
    <path d="M20 2v15M13 9h14" stroke="#1d4b80" stroke-width="5"/>
    <text x="20" y="36" text-anchor="middle" font-family="Open Sans, sans-serif" font-weight="600" font-size="18" fill="#202020">X,Y,Z</text>`,
  addGear: `
    <path d="M8 1v13M2 8h12" stroke="#1a1a1a" stroke-width="2"/>
    <circle cx="25" cy="27" r="9" fill="none" stroke="#855b1c" stroke-width="5"/><circle cx="25" cy="27" r="12" fill="none" stroke="#855b1c" stroke-width="3" stroke-dasharray="5 5"/>`,
  cursor: `<path d="${arrowHead}" transform="translate(10 3) scale(.9)" fill="#373737"/>`,
  cubeCheck: `
    <path d="M2 9L18 2 34 8V20L20 36 2 34z" fill="#404040"/><path d="M2 9L18 2 34 8 20 14z" fill="#464646"/>
    <circle cx="32" cy="31" r="9" fill="#454545"/><path d="M27 31l4 4 7-9" fill="none" stroke="#3a3a3a" stroke-width="3"/>`,
  cubeEdge: `<path d="M3 9L20 2 37 9V30L20 38 3 31z" fill="#414141"/><path d="M3 9L20 2 37 9 20 15z" fill="#474747"/><path d="M20 15V38" stroke="#343434" stroke-width="4"/>`,
  cubeFace: `<path d="M3 9L20 2 37 9V30L20 38 3 31z" fill="#434343"/><path d="M3 9L20 2 37 9 20 15z" fill="#4f4f4f"/><path d="M20 15L37 9V30L20 38z" fill="#373737"/>`,
  cube: `<path d="M3 9L20 2 37 9V30L20 38 3 31z" fill="#424242"/><path d="M3 9L20 2 37 9 20 15z" fill="#393939"/><path d="M20 15L37 9V30L20 38z" fill="#3c3c3c"/>`,
  cubeColor: `
    <path d="M0 8L20 0V40L0 32z" fill="#7a6238"/><path d="M20 0L40 9 20 18z" fill="#173a63"/><path d="M22 20L40 11V26L32 28z" fill="#173a63"/>
    <path d="M20 40V30l10 10zM38 29L26 37" fill="#141414" stroke="#141414" stroke-width="3"/>`,
  window: `<rect x="4" y="4" width="33" height="33" fill="#7a6238" stroke="#161616" stroke-width="3" stroke-dasharray="5 5"/>`,
  gearClock: `
    <circle cx="15" cy="13" r="11" fill="none" stroke="#44525e" stroke-width="3" stroke-dasharray="6 2"/><circle cx="15" cy="13" r="5" fill="#3f4c57"/>
    <circle cx="29" cy="29" r="10" fill="#4b5d6c" stroke="#404e5a" stroke-width="2"/><path d="M24 25l5 5 6-5" fill="none" stroke="#364450" stroke-width="2"/>`,
  clipboard: `
    <path d="${arrowHead}" transform="scale(.6)" fill="#141414"/>
    <rect x="18" y="16" width="20" height="23" fill="#505050" stroke="#5c3a1c" stroke-width="3"/><rect x="24" y="11" width="8" height="5" fill="#2c2c2c"/>
    <path d="M22 27l5 7 8-14" fill="none" stroke="#1d4a3e" stroke-width="3"/>`,
  swap: `
    <path d="M7 14Q10 5 20 5M18 0l6 5-6 5M34 22Q32 33 22 34M25 29l-6 5 6 5" fill="none" stroke="#1d4a3e" stroke-width="3"/>
    <path d="${arrowHead}" transform="translate(0 13) scale(.6)" fill="#141414"/>
    <path d="${arrowHead}" transform="translate(26 1) scale(.55)" fill="#4b4b4b" stroke="#141414" stroke-width="4"/>`,
  undo: `
    <path d="M3 4V17H14M5 15Q12 3 26 6" fill="none" stroke="#3b3b3b" stroke-width="3"/>
    <path d="${arrowHead}" transform="translate(20 13) scale(.62)" fill="#373737"/>`
}
</script>

<style>
body {
  margin: 0;
  overflow: hidden;
}
</style>

<style scoped>
.app {
  display: flex;
  flex-direction: column;
  height: 100vh;
  overflow: hidden;
  background: #fff;
  color: #3b3b3b;
  font-family: "Open Sans", "Noto Sans", sans-serif;
  font-size: 28px;
  line-height: 37px;
}

button {
  margin: 0;
  padding: 0;
  border: 0;
  background: none;
  color: inherit;
  font: inherit;
  white-space: nowrap;
  cursor: pointer;
}

svg {
  display: block;
  overflow: visible;
}

/* tabs */
.tab-bar {
  position: relative;
  display: flex;
  align-items: flex-end;
  justify-content: space-between;
  height: 79px;
  flex: none;
  box-shadow: inset 0 -1px #c8c8c8;
}

.tabs {
  display: flex;
  height: 100%;
  align-items: flex-end;
  padding-left: 28px;
}

.tab {
  height: 75px;
  padding: 2px 37px 0;
}

.tab.active {
  padding: 2px 36px 0;
  border: 1px solid #c8c8c8;
  border-bottom: 0;
  background: #fff;
  color: #000;
}

.tab.context {
  height: 78px;
  padding-top: 5px;
  margin-bottom: 1px;
  background: #fcf2f1;
}

.style-select {
  width: 236px;
  height: 47px;
  margin: 0 -1px 16px 0;
  padding: 0 2px;
  appearance: none;
  border: 1px solid #999;
  border-radius: 0;
  background: #fff;
  color: #000;
  font: inherit;
}

.style-arrow {
  position: absolute;
  right: 3px;
  top: 35px;
  pointer-events: none;
}

/* ribbon */
.ribbon {
  flex: none;
  height: 216px;
  border-bottom: 1px solid #c8c8c8;
  overflow: hidden;
}

.ribbon-row {
  display: flex;
  align-items: flex-start;
  height: 167px;
  padding-top: 7px;
  margin-left: -46px;
}

.tool {
  display: flex;
  flex: none;
  flex-direction: column;
  align-items: center;
  min-width: 86px;
  padding: 0 3px;
}

.tool.roomy {
  padding: 0 6px;
}

.tool-icon {
  width: 80px;
  height: 80px;
}

.tool-label {
  margin-top: 7px;
  white-space: pre;
}

.small-tools {
  display: flex;
  flex: none;
  flex-direction: column;
  padding-left: 7px;
}

.small-tool {
  display: flex;
  align-items: center;
  gap: 5px;
  height: 46px;
}

.small-icon {
  width: 40px;
  height: 40px;
}

.group-label {
  padding-right: 134px;
  text-align: center;
}

/* left panel */
.workspace {
  display: flex;
  flex: 1;
  min-height: 0;
}

.panel {
  display: flex;
  flex: none;
  flex-direction: column;
  width: 438px;
  box-sizing: border-box;
  padding-right: 8px;
  overflow: hidden;
}

.panel-header {
  display: flex;
  justify-content: flex-end;
  gap: 21px;
  padding: 26px 9px 0 0;
}

.panel-tools {
  display: flex;
  gap: 15px;
  padding: 33px 0 15px 7px;
}

.panel-body {
  flex: 1;
  border: solid #c8c8c8;
  border-width: 1px 1px 1px 0;
}

.panel-tabs {
  display: flex;
  justify-content: flex-end;
  gap: 33px;
  height: 46px;
  margin-top: 22px;
  padding: 0 20px 0 0;
  border-top: 1px solid #e2e2e2;
}

/* graphics view */
.viewport {
  position: relative;
  flex: 1;
  min-width: 0;
  background: #000;
  overflow: hidden;
}

.scene {
  width: 100%;
  height: 100%;
}

.axis-text {
  font-family: "Liberation Sans", sans-serif;
  font-size: 20px;
}

.axis-text.small {
  font-size: 14px;
  font-weight: bold;
}

.selection-bar {
  position: absolute;
  top: 12px;
  left: calc(100% / 3);
  display: flex;
  align-items: stretch;
  height: 90px;
  box-sizing: border-box;
  padding: 0 45px 0 44px;
  border: 2px solid #353535;
  border-radius: 45px;
  background: #4b4b4b;
  color: #000;
}

.selection-bar svg {
  flex: none;
  width: 40px;
  height: 40px;
}

.sel-btn {
  display: flex;
  align-items: center;
  justify-content: center;
  width: 55px;
  box-sizing: border-box;
}

.sel-btn.last {
  width: 57px;
  border-right: 2px solid #3a3a3a;
}

.sel-btn.split {
  width: 98px;
  gap: 20px;
}

.sel-btn.selected {
  border: 2px solid #0d456c;
  background: #445564;
}

.auto-cursor {
  display: flex;
  align-items: center;
  width: 245px;
  padding: 0 12px 0 7px;
  box-sizing: border-box;
  gap: 6px;
}

.auto-cursor .caret {
  margin-left: auto;
}

.caret {
  display: inline-block;
  border: 7px solid transparent;
  border-top: 9px solid #262626;
  border-bottom: 0;
}

/* status bar */
.status-bar {
  display: flex;
  flex: none;
  align-items: center;
  justify-content: flex-end;
  height: 54px;
  box-sizing: border-box;
  padding: 9px 3px 0 0;
  background: #26579e;
  color: #fff;
  white-space: pre;
}

.section-view {
  margin-right: 22px;
}

.entities {
  margin-right: 150px;
}

.coord {
  margin: 0 26px;
}

.status-bar .caret {
  margin: 0 14px;
  border-top-color: #7c828c;
  vertical-align: middle;
}

.plane.first {
  margin-left: 14px;
}

.mode {
  margin: 0 16px 0 7px;
}
</style>
